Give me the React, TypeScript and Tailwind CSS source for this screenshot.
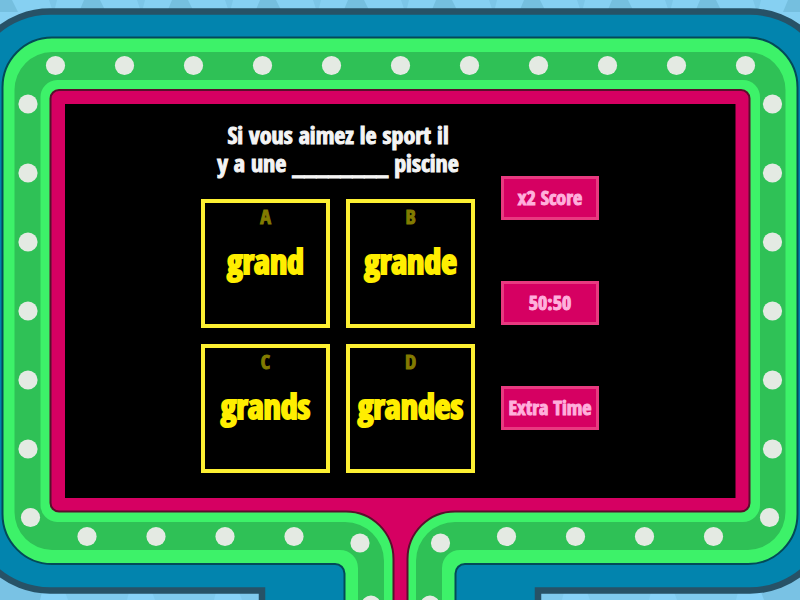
const answers = [
  { letter: "A", text: "grand" },
  { letter: "B", text: "grande" },
  { letter: "C", text: "grands" },
  { letter: "D", text: "grandes" },
];

const lifelines = ["x2 Score", "50:50", "Extra Time"];

const bulbs: [number, number][] = [
  // top row
  ...Array.from({ length: 11 }, (_, i): [number, number] => [55.5 + 69 * i, 65.5]),
  // sides
  ...Array.from({ length: 6 }, (_, i): [number, number] => [28, 104 + 69 * i]),
  ...Array.from({ length: 6 }, (_, i): [number, number] => [772.5, 104 + 69 * i]),
  [30.5, 517.5],
  [769.5, 517.5],
  // bottom rows
  ...Array.from({ length: 4 }, (_, i): [number, number] => [87 + 69 * i, 536.5]),
  ...Array.from({ length: 4 }, (_, i): [number, number] => [506.5 + 69 * i, 536.5]),
  [360, 543],
  [440.5, 543],
  [371, 605],
  [430, 605],
];

const peaks = Array.from({ length: 10 }, (_, i) => 5 + 88 * i);
const domes = Array.from({ length: 10 }, (_, i) => 54 + 87 * i);

function Marquee() {
  return (
    <svg
      className="absolute inset-0 h-full w-full"
      viewBox="0 0 800 600"
      preserveAspectRatio="xMidYMid slice"
      aria-hidden="true"
    >
      <rect width="800" height="300" fill="#86d0f2" />
      <rect y="300" width="800" height="300" fill="#79c2e4" />
      {peaks.map((x) => (
        <g key={x}>
          <path d={`M${x - 9} 0H${x + 7}L${x + 13} 12H${x - 14}Z`} fill="#75bfdf" />
          <path d={`M${x + 44} 0H${x + 52}L${x + 49} 12H${x + 48}Z`} fill="#7cc6e8" />
        </g>
      ))}
      <rect x="50" y="592" width="700" height="8" fill="#7fcaee" />
      {domes.map((x) => (
        <path key={x} d={`M${x - 12} 592H${x + 11}L${x + 14} 600H${x - 14}Z`} fill="#87d2f8" />
      ))}

      <path
        d="M50 11.5H750A82 82 0 0 1 832 93V509A82 82 0 0 1 750 590.5H538V610H262V590.5H50A82 82 0 0 1 -32 509V93A82 82 0 0 1 50 11.5Z"
        fill="#0284ae"
        stroke="#275267"
        strokeWidth="6.5"
      />

      {/* light green body */}
      <path
        d="M52 37.5H748A49.5 50 0 0 1 797.5 88V514A49.5 50 0 0 1 748 564H465A9.5 9.5 0 0 0 455.5 573.5V610H344.5V573.5A9.5 9.5 0 0 0 335 564H52A49.5 50 0 0 1 2.5 514V88A49.5 50 0 0 1 52 37.5Z"
        fill="#3df269"
        stroke="#034a58"
        strokeWidth="2"
      />
      {/* recessed channel that holds the bulbs */}
      <path
        d="M52 52H748A37.5 38 0 0 1 785.5 90V512A37.5 38 0 0 1 748 550H460A18 18 0 0 0 442 568V610H358V568A18 18 0 0 0 340 550H52A37.5 38 0 0 1 14.5 512V90A37.5 38 0 0 1 52 52Z"
        fill="#2fc156"
      />
      <path
        d="M57 80H743A17 17 0 0 1 760 97V505A17 17 0 0 1 743 522H455A39 39 0 0 0 416 561V610H384V561A39 39 0 0 0 345 522H57A17 17 0 0 1 40.5 505V97A17 17 0 0 1 57 80Z"
        fill="#3df269"
      />
      <path
        d="M59 90H741A8.5 8.5 0 0 1 749.5 98.5V503A8.5 8.5 0 0 1 741 511.5H455A47.5 47.5 0 0 0 407.5 559V610H393.5V559A47.5 47.5 0 0 0 346 511.5H59A8.5 8.5 0 0 1 50.5 503V98.5A8.5 8.5 0 0 1 59 90Z"
        fill="#d60062"
        stroke="#5a0f2c"
        strokeWidth="2"
      />
      <rect x="65" y="104" width="670.5" height="394" fill="#000" />
      {bulbs.map(([x, y]) => (
        <circle key={`${x}-${y}`} cx={x} cy={y} r="9.6" fill="#e4eae3" />
      ))}
    </svg>
  );
}

export default function App() {
  return (
    <div className="relative min-h-screen overflow-hidden bg-[#86d0f2] font-['Open_Sans_Condensed','Roboto_Condensed',sans-serif] font-bold">
      <Marquee />
      <main className="relative flex min-h-screen items-center justify-center gap-[26px] pb-[6px]">
        <section className="w-[274px]">
          <h1 className="mb-[22px] text-center text-2xl leading-7 font-bold text-[#f4f4f4] [-webkit-text-stroke:1px_#f4f4f4]">
            Si vous aimez le sport il
            <br />y a une <span className="font-['DejaVu_Sans',sans-serif] leading-none">________</span> piscine
          </h1>
          <div className="grid grid-cols-2 gap-4">
            {answers.map(({ letter, text }) => (
              <button
                key={letter}
                type="button"
                className="flex h-[129px] flex-col items-center border-4 border-[#fdf032] text-[#ffee00]"
              >
                <span className="text-xl leading-7 text-[#827b00] [-webkit-text-stroke:1px_#827b00]">{letter}</span>
                <span className="mt-2 text-[34px] leading-[44px] [-webkit-text-stroke:2px_#ffee00]">{text}</span>
              </button>
            ))}
          </div>
        </section>
        <aside className="flex flex-col gap-[61px] pt-3">
          {lifelines.map((label) => (
            <button
              key={label}
              type="button"
              className="h-11 w-[98px] border-3 border-[#e83a80] bg-[#d60062] text-xl leading-6 whitespace-nowrap text-[#ffb0dc] [-webkit-text-stroke:1px_#ffb0dc]"
            >
              {label}
            </button>
          ))}
        </aside>
      </main>
    </div>
  );
}
